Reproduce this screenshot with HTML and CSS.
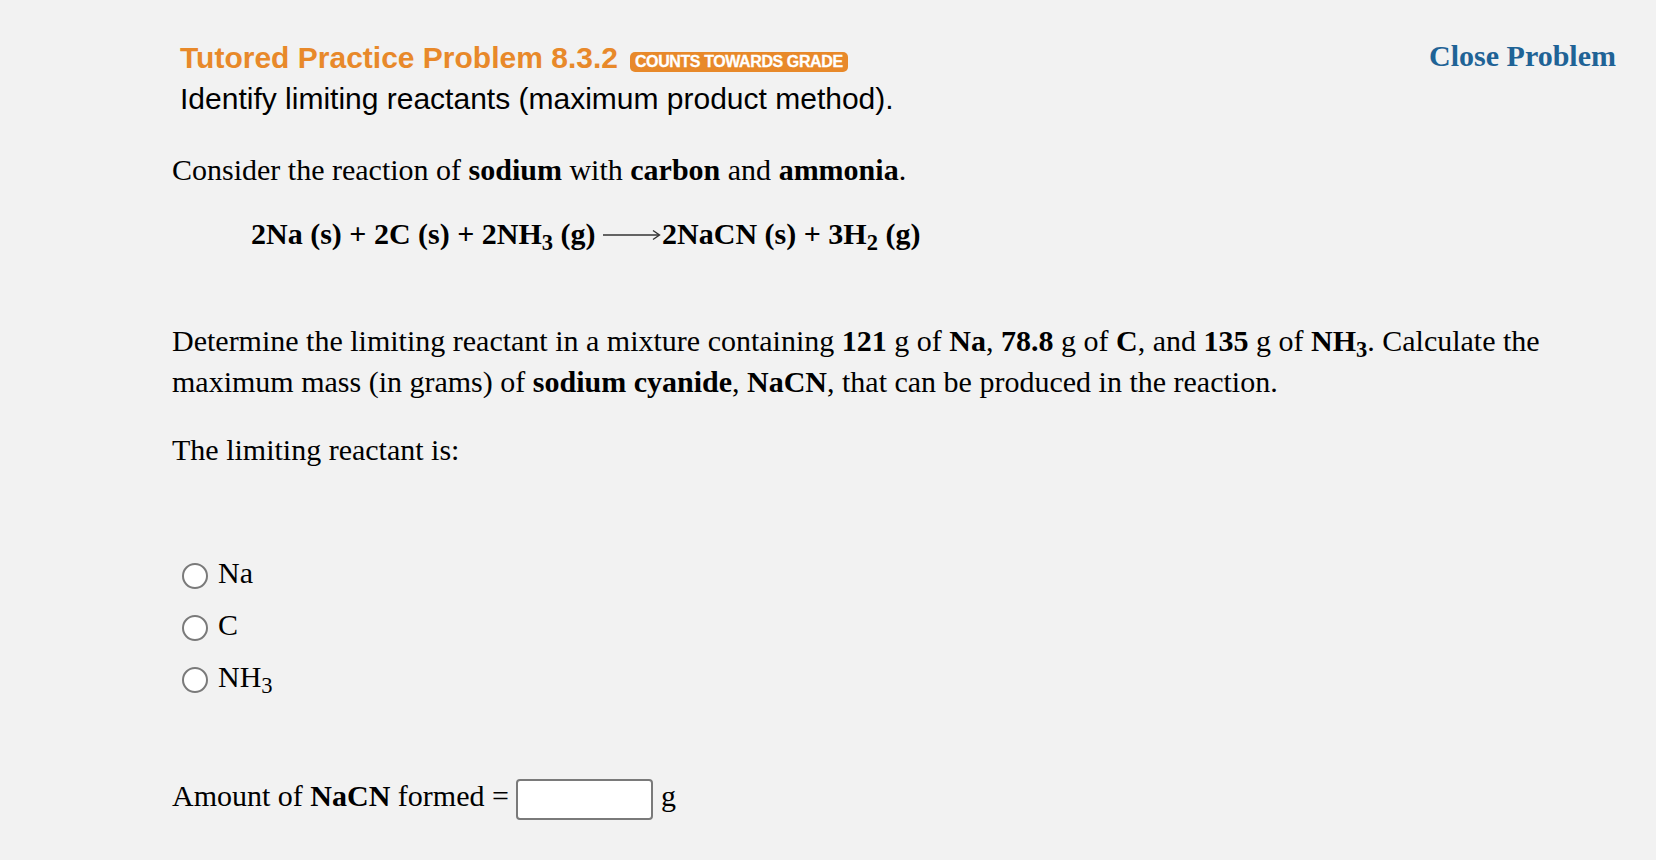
FILE: index.html
```html
<!DOCTYPE html>
<html lang="en">
<head>
<meta charset="utf-8">
<title>Tutored Practice Problem 8.3.2</title>
<link rel="stylesheet" href="styles.css">
</head>
<body>
<div class="page">
  <header class="header">
    <div class="title-block">
      <div class="title-line">
        <span class="title">Tutored Practice Problem 8.3.2</span>
        <span class="badge">COUNTS TOWARDS GRADE</span>
      </div>
      <div class="subtitle">Identify limiting reactants (maximum product method).</div>
    </div>
    <a class="close" href="#">Close Problem</a>
  </header>

  <p class="intro">Consider the reaction of <b>sodium</b> with <b>carbon</b> and <b>ammonia</b>.</p>

  <p class="equation">2Na (s) + 2C (s) + 2NH<sub>3</sub> (g) <svg class="arrow" width="58" height="12" viewBox="0 0 58 12"><line x1="0" y1="6" x2="56" y2="6" stroke="#333" stroke-width="1.6"/><polyline points="50,1.5 56.5,6 50,10.5" fill="none" stroke="#333" stroke-width="1.4"/></svg>2NaCN (s) + 3H<sub>2</sub> (g)</p>

  <p class="question">Determine the limiting reactant in a mixture containing <b>121</b> g of <b>Na</b>, <b>78.8</b> g of <b>C</b>, and <b>135</b> g of <b>NH<sub>3</sub></b>. Calculate the maximum mass (in grams) of <b>sodium cyanide</b>, <b>NaCN</b>, that can be produced in the reaction.</p>

  <p class="prompt">The limiting reactant is:</p>

  <div class="choices">
    <label class="choice"><input type="radio" name="lr" class="radio"><span>Na</span></label>
    <label class="choice"><input type="radio" name="lr" class="radio"><span>C</span></label>
    <label class="choice"><input type="radio" name="lr" class="radio"><span>NH<sub>3</sub></span></label>
  </div>

  <p class="amount">Amount of <b>NaCN</b> formed = <input type="text" class="answer"> g</p>
</div>
</body>
</html>
```

FILE: styles.css
```css
html, body {
  margin: 0;
  padding: 0;
  background: #f2f2f2;
}

.page {
  padding: 40px 40px 40px 172px;
  font-family: "Liberation Serif", "Times New Roman", serif;
  font-size: 30px;
  color: #000;
}

.header {
  display: flex;
  justify-content: space-between;
  align-items: flex-start;
}

.title-block {
  margin-left: 8px;
  font-family: "Liberation Sans", Arial, sans-serif;
}

.title-line {
  display: flex;
  align-items: baseline;
  gap: 12px;
  line-height: 36px;
}

.title {
  font-weight: bold;
  font-size: 30px;
  color: #e8892a;
}

.badge {
  display: inline-block;
  background: #e8892a;
  color: #fff;
  font-weight: bold;
  font-size: 16px;
  letter-spacing: -0.4px;
  -webkit-text-stroke: 0.3px #fff;
  line-height: 20px;
  padding: 0 5px 0 5px;
  border-radius: 5px;
  position: relative;
  top: -1px;
}

.subtitle {
  font-size: 30px;
  line-height: 41px;
  margin-top: 2px;
}

.close {
  font-family: "Liberation Serif", "Times New Roman", serif;
  font-weight: bold;
  font-size: 30px;
  line-height: 32px;
  color: #1f6396;
  text-decoration: none;
}

p {
  margin: 0;
  line-height: 41px;
}

sub {
  font-size: 0.75em;
  line-height: 0;
  vertical-align: -0.27em;
}

.intro {
  margin-top: 30px;
}

.equation {
  margin-top: 23px;
  margin-left: 79px;
  font-weight: bold;
}

.arrow {
  vertical-align: 3px;
  margin-right: 1px;
}

.question {
  margin-top: 66px;
}

.prompt {
  margin-top: 27px;
}

.choices {
  margin-top: 77px;
  display: flex;
  flex-direction: column;
}

.choice {
  display: flex;
  align-items: center;
  height: 52px;
  line-height: 52px;
  padding-left: 10px;
}

.radio {
  appearance: none;
  -webkit-appearance: none;
  width: 26px;
  height: 26px;
  margin: 6px 10px 0 0;
  border: 2px solid #7a7a7a;
  border-radius: 50%;
  background: #fff;
  box-sizing: border-box;
}

.amount {
  margin-top: 72px;
}

.answer {
  box-sizing: border-box;
  width: 137px;
  height: 41px;
  border: 2px solid #7a7a7a;
  border-radius: 4px;
  background: #fff;
  vertical-align: middle;
  padding: 0 6px;
  font-size: 20px;
}
```
